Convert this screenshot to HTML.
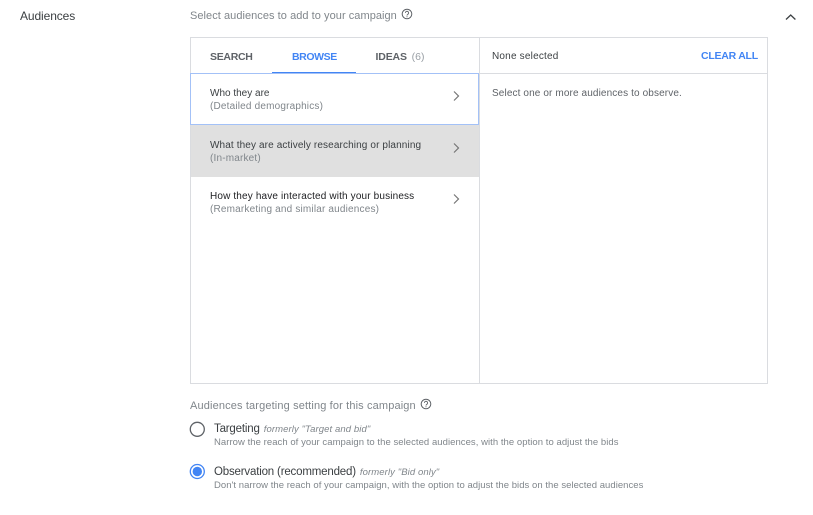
<!DOCTYPE html>
<html><head><meta charset="utf-8">
<style>
html,body{margin:0;padding:0;background:#fff;width:813px;height:515px;overflow:hidden}
body{font-family:"Liberation Sans",sans-serif;position:relative}
.t{position:absolute;white-space:nowrap;line-height:14px}
.b{position:absolute}
svg{position:absolute;overflow:visible}
.tab{font-size:10.5px;font-weight:bold;letter-spacing:-.3px}
</style></head><body>
<div class="t" style="left:20px;top:9px;font-size:12px;color:#3c4043;letter-spacing:-.1px">Audiences</div>
<div class="t" style="left:190px;top:9px;font-size:11px;color:#80868b;letter-spacing:.05px">Select audiences to add to your campaign</div>
<svg style="left:401px;top:8px" width="12" height="12" viewBox="0 0 12 12" fill="none" stroke="#5f6368"><circle cx="6" cy="6" r="4.8"/><path d="M4.4 4.9a1.6 1.6 0 1 1 2.5 1.3c-.6.4-.9.6-.9 1.3M6 8.2v1" stroke-width=".9"/></svg>
<svg style="left:785px;top:13px" width="12" height="8" viewBox="0 0 12 8" fill="none" stroke="#3c4043" stroke-width="1.3"><path d="M1 6.5L5.7 2l4.7 4.5"/></svg>

<div class="b" style="left:190px;top:37px;width:576px;height:345px;border:1px solid #dadce0"></div>
<div class="b" style="left:479px;top:37px;width:1px;height:347px;background:#dadce0"></div>
<div class="b" style="left:480px;top:73px;width:287px;height:1px;background:#dadce0"></div>

<div class="t tab" style="left:210px;top:50px;color:#5f6368">SEARCH</div>
<div class="t tab" style="left:292px;top:50px;color:#4285f4;letter-spacing:-.4px">BROWSE</div>
<div class="t tab" style="left:375.5px;top:50px;color:#5f6368;letter-spacing:-.15px">IDEAS <span style="font-weight:normal;color:#9aa0a6;letter-spacing:0;margin-left:2px">(6)</span></div>
<div class="b" style="left:272px;top:72px;width:84px;height:1px;background:#4285f4"></div>

<div class="t" style="left:492px;top:50px;font-size:10px;color:#3c4043;letter-spacing:.2px">None selected</div>
<div class="t tab" style="left:701px;top:49px;color:#4285f4;letter-spacing:-.25px">CLEAR ALL</div>
<div class="t" style="left:492px;top:87px;font-size:10px;color:#5f6368;letter-spacing:.12px">Select one or more audiences to observe.</div>

<div class="b" style="left:190px;top:73px;width:287px;height:50px;border:1px solid #a3c1f7"></div>
<div class="t" style="left:210px;top:87px;font-size:10px;color:#3c4043;letter-spacing:0">Who they are</div>
<div class="t" style="left:210px;top:100px;font-size:10px;color:#80868b;letter-spacing:.18px">(Detailed demographics)</div>
<svg style="left:452px;top:90px" width="9" height="12" viewBox="0 0 9 12" fill="none" stroke="#757575" stroke-width="1.2"><path d="M2 1.5l4.500 4.500-4.500 4.500"/></svg>

<div class="b" style="left:191px;top:125px;width:288px;height:52px;background:#e0e0e0"></div>
<div class="t" style="left:210px;top:139px;font-size:10px;color:#3c4043;letter-spacing:.12px">What they are actively researching or planning</div>
<div class="t" style="left:210px;top:152px;font-size:10px;color:#80868b;letter-spacing:.18px">(In-market)</div>
<svg style="left:452px;top:142px" width="9" height="12" viewBox="0 0 9 12" fill="none" stroke="#757575" stroke-width="1.2"><path d="M2 1.5l4.500 4.500-4.500 4.500"/></svg>

<div class="t" style="left:210px;top:190px;font-size:10px;color:#202124;letter-spacing:.15px">How they have interacted with your business</div>
<div class="t" style="left:210px;top:203px;font-size:10px;color:#80868b;letter-spacing:.18px">(Remarketing and similar audiences)</div>
<svg style="left:452px;top:193px" width="9" height="12" viewBox="0 0 9 12" fill="none" stroke="#757575" stroke-width="1.2"><path d="M2 1.5l4.500 4.500-4.500 4.500"/></svg>

<div class="t" style="left:190px;top:399px;font-size:11px;color:#80868b;letter-spacing:.14px">Audiences targeting setting for this campaign</div>
<svg style="left:420px;top:398px" width="12" height="12" viewBox="0 0 12 12" fill="none" stroke="#5f6368"><circle cx="6" cy="6" r="4.8"/><path d="M4.400 4.900a1.600 1.600 0 1 1 2.500 1.300c-.6.400-.9.600-.9 1.300M6 8.200v1" stroke-width=".9"/></svg>

<svg style="left:189px;top:421px" width="17" height="17" viewBox="0 0 17 17" fill="none"><circle cx="8.300" cy="8.300" r="7" stroke="#5f6368" stroke-width="1.300"/></svg>
<div class="t" style="left:214px;top:422px;font-size:11.5px;color:#3c4043;letter-spacing:-.18px"><span>Targeting</span> <i style="font-size:9.500px;color:#80868b;letter-spacing:.1px;margin-left:1px">formerly "Target and bid"</i></div>
<div class="t" style="left:214px;top:436px;font-size:9.500px;color:#80868b;letter-spacing:.05px">Narrow the reach of your campaign to the selected audiences, with the option to adjust the bids</div>

<svg style="left:189px;top:463px" width="17" height="17" viewBox="0 0 17 17" fill="none"><circle cx="8.300" cy="8.500" r="7" stroke="#4285f4" stroke-width="1.300"/><circle cx="8.300" cy="8.500" r="4.700" fill="#4285f4"/></svg>
<div class="t" style="left:214px;top:465px;font-size:11.5px;color:#3c4043;letter-spacing:-.18px"><span>Observation (recommended)</span> <i style="font-size:9.500px;color:#80868b;letter-spacing:.1px;margin-left:1px">formerly "Bid only"</i></div>
<div class="t" style="left:214px;top:479px;font-size:9.500px;color:#80868b;letter-spacing:.04px">Don't narrow the reach of your campaign, with the option to adjust the bids on the selected audiences</div>
</body></html>
